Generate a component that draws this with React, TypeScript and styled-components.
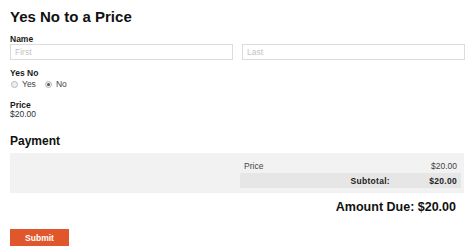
import React from "react";
import styled, {createGlobalStyle} from "styled-components";

const GlobalStyle = createGlobalStyle`
    body {
        margin: 0;
        background: #fff;
        font-family: "Liberation Sans", Arial, sans-serif;
        color: #333;
    }
`;

const Form = styled.form`
    width: 474px;
    box-sizing: border-box;
    padding: 8px 10px 0 10px;
    display: flex;
    flex-direction: column;
`;

const Title = styled.h1`
    margin: 0;
    font-size: 15px;
    line-height: 17px;
    font-weight: bold;
    color: #111;
`;

const Field = styled.div<{ $top: number }>`
    display: flex;
    flex-direction: column;
    margin-top: ${(p) => p.$top}px;
`;

const Label = styled.div`
    font-size: 8.5px;
    line-height: 10px;
    font-weight: bold;
    color: #1a1a1a;
`;

const NameRow = styled.div`
    display: grid;
    grid-template-columns: 223px 223px;
    column-gap: 9px;
`;

const TextInput = styled.input`
    box-sizing: border-box;
    height: 16px;
    margin: 0;
    padding: 0 4px;
    border: 1px solid #dcdcdc;
    font-family: "Liberation Sans", Arial, sans-serif;
    font-size: 8.5px;
    color: #333;
    outline: none;

    &::placeholder {
        color: #c4c4c4;
    }
`;

const RadioRow = styled.div`
    display: flex;
    align-items: center;
    height: 12px;
    padding-left: 1px;
`;

const RadioOption = styled.label`
    display: flex;
    align-items: center;
    gap: 4px;
    margin-right: 9px;
    font-size: 8.5px;
    color: #444;
`;

const RadioDot = styled.span<{ $checked?: boolean }>`
    box-sizing: border-box;
    width: 7px;
    height: 7px;
    border-radius: 50%;
    border: 1px solid #b8b8b8;
    background: #efefef;
    display: flex;
    align-items: center;
    justify-content: center;

    &::after {
        content: "";
        width: 3px;
        height: 3px;
        border-radius: 50%;
        background: ${(p) => (p.$checked ? "#555" : "transparent")};
    }
`;

const Value = styled.div`
    font-size: 8.5px;
    line-height: 9px;
    color: #333;
`;

const SectionTitle = styled.h2`
    margin: 15px 0 0 0;
    font-size: 12px;
    line-height: 14px;
    font-weight: bold;
    color: #111;
`;

const PaymentBox = styled.div`
    margin-top: 5px;
    background: #f2f2f2;
    padding: 6px 3px 5px 0;
    display: flex;
    justify-content: flex-end;
`;

const Summary = styled.div`
    width: 221px;
    display: flex;
    flex-direction: column;
`;

const SummaryRow = styled.div<{ $total?: boolean }>`
    display: flex;
    align-items: center;
    height: ${(p) => (p.$total ? 15 : 14)}px;
    background: ${(p) => (p.$total ? "#e6e6e6" : "transparent")};
    font-size: 8.5px;
    font-weight: ${(p) => (p.$total ? "bold" : "normal")};
    color: ${(p) => (p.$total ? "#222" : "#444")};
    letter-spacing: ${(p) => (p.$total ? "0.3px" : "0")};
`;

const RowLabel = styled.span<{ $right?: boolean }>`
    flex: 1;
    padding: 0 4px;
    text-align: ${(p) => (p.$right ? "right" : "left")};
`;

const RowValue = styled.span`
    width: 67px;
    padding-right: 4px;
    box-sizing: border-box;
    text-align: right;
`;

const AmountDue = styled.div`
    margin-top: 7px;
    padding-right: 8px;
    text-align: right;
    font-size: 12.5px;
    line-height: 15px;
    font-weight: bold;
    color: #111;
`;

const SubmitButton = styled.button`
    margin-top: 14px;
    width: 59px;
    height: 17px;
    padding: 0;
    border: none;
    background: #e0572b;
    color: #fff;
    font-family: "Liberation Sans", Arial, sans-serif;
    font-size: 8.5px;
    font-weight: bold;
    cursor: pointer;
`;

const App: React.FC = () => {
    return (
        <>
            <GlobalStyle/>
            <Form onSubmit={(e) => e.preventDefault()}>
                <Title>Yes No to a Price</Title>
                <Field $top={9}>
                    <Label>Name</Label>
                    <NameRow>
                        <TextInput placeholder="First"/>
                        <TextInput placeholder="Last"/>
                    </NameRow>
                </Field>
                <Field $top={8}>
                    <Label>Yes No</Label>
                    <RadioRow>
                        <RadioOption><RadioDot/>Yes</RadioOption>
                        <RadioOption><RadioDot $checked/>No</RadioOption>
                    </RadioRow>
                </Field>
                <Field $top={10}>
                    <Label>Price</Label>
                    <Value>$20.00</Value>
                </Field>
                <SectionTitle>Payment</SectionTitle>
                <PaymentBox>
                    <Summary>
                        <SummaryRow>
                            <RowLabel>Price</RowLabel>
                            <RowValue>$20.00</RowValue>
                        </SummaryRow>
                        <SummaryRow $total>
                            <RowLabel $right>Subtotal:</RowLabel>
                            <RowValue>$20.00</RowValue>
                        </SummaryRow>
                    </Summary>
                </PaymentBox>
                <AmountDue>Amount Due: $20.00</AmountDue>
                <div>
                    <SubmitButton type="submit">Submit</SubmitButton>
                </div>
            </Form>
        </>
    );
};

export default App;
